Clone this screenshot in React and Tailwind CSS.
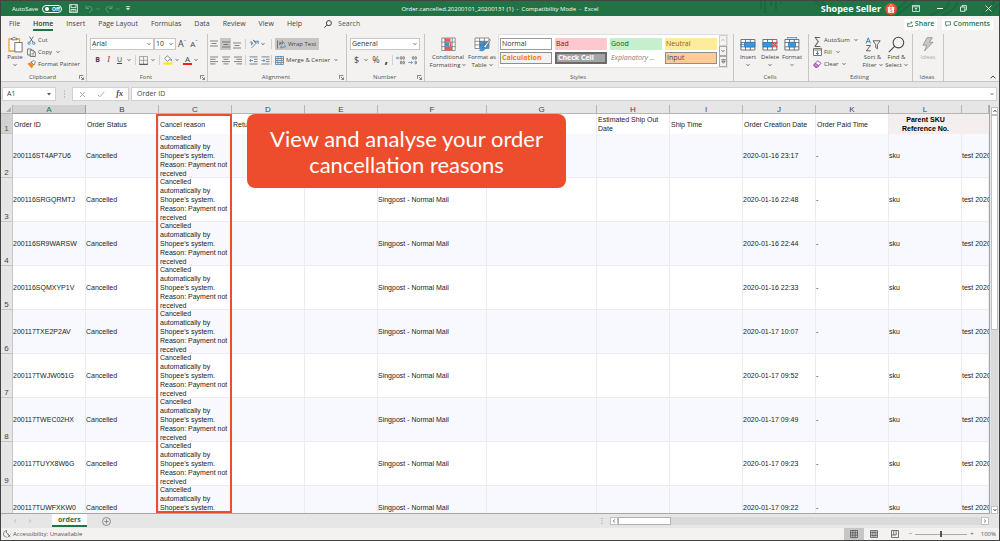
import { useState } from 'react'

/**
 * App.jsx
 * -------
 * Spreadsheet window showing the cancelled orders export, with a callout
 * pointing at the "Cancel reason" column.
 *
 *  title bar → ribbon tabs → ribbon → formula bar → grid → sheet tabs → status
 */

const REASON = "Cancelled automatically by Shopee's system. Reason: Payment not received"

const ORDERS = [
  { row: 2, id: '200116ST4AP7U6', created: '2020-01-16 23:17' },
  { row: 3, id: '200116SRGQRMTJ', created: '2020-01-16 22:48' },
  { row: 4, id: '200116SR9WARSW', created: '2020-01-16 22:44' },
  { row: 5, id: '200116SQMXYP1V', created: '2020-01-16 22:33' },
  { row: 6, id: '200117TXE2P2AV', created: '2020-01-17 10:07' },
  { row: 7, id: '200117TWJW051G', created: '2020-01-17 09:52' },
  { row: 8, id: '200117TWEC02HX', created: '2020-01-17 09:49' },
  { row: 9, id: '200117TUYX8W6G', created: '2020-01-17 09:23' },
  { row: 10, id: '200117TUWFXKW0', created: '2020-01-17 09:22' },
]

const COLUMNS = [
  { letter: 'A', title: 'Order ID', width: 'w-[73px]' },
  { letter: 'B', title: 'Order Status', width: 'w-[73px]' },
  { letter: 'C', title: 'Cancel reason', width: 'w-[73px]' },
  { letter: 'D', title: 'Return / Refund', width: 'w-[73px]' },
  { letter: 'E', title: '', width: 'w-[73px]' },
  { letter: 'F', title: '', width: 'w-[109px]' },
  { letter: 'G', title: '', width: 'w-[110px]' },
  { letter: 'H', title: 'Estimated Ship Out Date', width: 'w-[73px]' },
  { letter: 'I', title: 'Ship Time', width: 'w-[73px]' },
  { letter: 'J', title: 'Order Creation Date', width: 'w-[73px]' },
  { letter: 'K', title: 'Order Paid Time', width: 'w-[73px]' },
  { letter: 'L', title: 'Parent SKU Reference No.', width: 'w-[73px]', strong: true },
  { letter: '', title: '', width: '', strong: true },
]

const TABS = ['File', 'Home', 'Insert', 'Page Layout', 'Formulas', 'Data', 'Review', 'View', 'Help']

const CELL_STYLES = [
  { name: 'Normal', look: 'bg-white text-[#333] border border-[#9a9a9a]' },
  { name: 'Bad', look: 'bg-[#ffc7ce] text-[#9c0006]' },
  { name: 'Good', look: 'bg-[#c6efce] text-[#006100]' },
  { name: 'Neutral', look: 'bg-[#ffeb9c] text-[#9c5700]' },
  { name: 'Calculation', look: 'bg-[#f2f2f2] text-[#fa7d00] font-bold border border-[#8f8f8f]' },
  { name: 'Check Cell', look: 'bg-[#a5a5a5] text-white font-bold border-2 border-[#6b6b6b]' },
  { name: 'Explanatory ...', look: 'text-[#7f7f7f] italic' },
  { name: 'Input', look: 'bg-[#ffcc99] text-[#3f3f76] border border-[#8f8f8f]' },
]

// ── Icons ────────────────────────────────────────────────────────────────
function Chevron({ className = '' }) {
  return (
    <svg className={`w-1 h-1 shrink-0 ${className}`} viewBox="0 0 4 4" fill="none" stroke="currentColor">
      <path d="M.6 1.2 2 2.7 3.4 1.2" strokeWidth=".8" />
    </svg>
  )
}

function Launcher() {
  return (
    <svg className="w-[5px] h-[5px]" viewBox="0 0 5 5" fill="none" stroke="#555" strokeWidth=".7">
      <path d="M.5 3.8V.5h3.8M2 2l2.3 2.3M4.5 2.4v2.1H2.4" />
    </svg>
  )
}

function Lines({ rows, className = '' }) {
  return (
    <svg className={`w-2 h-[9px] ${className}`} viewBox="0 0 8 9" stroke="#555" strokeWidth=".7">
      {rows.map(([x1, x2, y]) => (
        <path key={y} d={`M${x1} ${y}H${x2}`} />
      ))}
    </svg>
  )
}

function TableIcon({ kind }) {
  return (
    <svg className="w-4 h-[15px]" viewBox="0 0 16 15" fill="none" stroke="#555" strokeWidth=".8">
      <path d="M.9 2.5h14v10.500H.9zM.9 5.600h14M.9 9.800h14M5.500 2.500v10.500M10.300 2.500v10.500" fill="#fff" />
      {kind === 'insert' && (
        <>
          <path d="M4.500 5.300h10.500v4.700H4.500z" fill="#3a96dd" stroke="#2b7cc0" />
          <path d="M5.500 7.600H.4M2.300 5.600.4 7.600l1.900 2" stroke="#2b7cc0" />
        </>
      )}
      {kind === 'delete' && (
        <>
          <path d="M1 5.600h8.500v4.200H1z" fill="#3a96dd" stroke="#2b7cc0" />
          <path d="M10 5l5.200 5.200M15.200 5 10 10.200" stroke="#e33b3b" strokeWidth="1.200" />
        </>
      )}
      {kind === 'format' && (
        <>
          <path d="M4.500 5.300h7v4.700h-7z" fill="#3a96dd" stroke="#2b7cc0" />
          <path d="M3.500.7h9M3.500 0v1.500M12.500 0v1.500" stroke="#2b7cc0" />
        </>
      )}
    </svg>
  )
}

function ConditionalIcon() {
  return (
    <svg className="w-[15px] h-[15px]" viewBox="0 0 15 15" stroke="#666" strokeWidth=".7">
      <path d="M.8 1h13.400v12.500H.8z" fill="#fff" />
      <path d="M4 1.300h5.500v3.500H4zM4 10h7v3.200H4z" fill="#ef5a5a" stroke="none" />
      <path d="M4 5.400h4v3.900H4z" fill="#3a96dd" stroke="none" />
      <path d="M8.500 5.400h2v3.900h-2z" fill="#ef5a5a" stroke="none" />
      <path d="M.8 5.100h13.400M.8 9.600h13.400M3.800 1v12.500M11.200 1v12.500" fill="none" />
    </svg>
  )
}

function FormatTableIcon() {
  return (
    <svg className="w-[17px] h-[15px]" viewBox="0 0 17 15" fill="none" stroke="#666" strokeWidth=".7">
      <path d="M1 1h14v10.500H1z" fill="#fff" />
      <path d="M5.600 4.300H15v7.200H5.600z" fill="#3a96dd" stroke="none" />
      <path d="M1 4.300h14M1 7.900h14M5.600 1v10.500M10.300 1v10.500" />
      <path d="M15.800 2.300 9.600 9.800l1.700 1.300 5-7.800z" fill="#fff" />
      <path d="M9.400 10c-1.900.2-1.700 2.400-3.900 3.300 2.300 1.200 5.200.3 5.700-2z" fill="#3a96dd" stroke="#2b7cc0" />
    </svg>
  )
}

function PasteIcon() {
  return (
    <svg className="w-[15px] h-[17px]" viewBox="0 0 15 17" fill="none">
      <path d="M1 3h10.500v12H1z" fill="#fff" stroke="#f0a030" strokeWidth="1.300" />
      <path d="M3.500 3.800V2.400h1.300C5 1 7.600 1 7.800 2.400h1.300v1.400z" fill="#f3f2f1" stroke="#666" strokeWidth=".8" />
      <path d="M6.800 6.500h7.300v9.400H6.800z" fill="#fff" stroke="#666" strokeWidth=".9" />
    </svg>
  )
}

function CutIcon() {
  return (
    <svg className="w-[9px] h-[9px]" viewBox="0 0 9 9" fill="none" strokeWidth=".8">
      <path d="M2.400.5 6 6.200M6.400.5 2.800 6.200" stroke="#555" />
      <circle cx="2" cy="7.200" r="1.200" stroke="#2b7cc0" />
      <circle cx="6.700" cy="7.200" r="1.200" stroke="#2b7cc0" />
    </svg>
  )
}

function CopyIcon() {
  return (
    <svg className="w-[9px] h-[9px]" viewBox="0 0 9 9" fill="#fff" stroke="#555" strokeWidth=".8">
      <path d="M.6 1h3.600v6H.6z" />
      <path d="M3.300 2.200h3l2 2v4.300h-5z" />
      <path d="M6 2.400v2h2M4.500 5.700h2.500M4.500 7h2.500" fill="none" strokeWidth=".6" />
    </svg>
  )
}

function BrushIcon() {
  return (
    <svg className="w-[9px] h-[9px]" viewBox="0 0 9 9">
      <path d="M.4 3.800 3.600 2.300l3 3-1.800 3.200z" fill="#f08a24" />
      <path d="m4 2 3-1.500 1.400 1.400L7 5z" fill="#fff" stroke="#555" strokeWidth=".7" />
    </svg>
  )
}

function BordersIcon() {
  return (
    <svg className="w-[9px] h-[9px]" viewBox="0 0 9 9" fill="none" stroke="#777" strokeWidth=".6">
      <path d="M.5.5h8v7.500M.5.500V8M4.500.5V8M.5 4.300h8" />
      <path d="M.2 8.300h8.600" stroke="#333" strokeWidth="1" />
    </svg>
  )
}

function BucketIcon() {
  return (
    <svg className="w-[10px] h-[10px]" viewBox="0 0 10 10" fill="none">
      <path d="m4.300.800 3.200 3L4.300 6.300 1.700 3.600z" fill="#fff" stroke="#555" strokeWidth=".7" />
      <path d="M7.800 3.500c1.300.8 1.300 2.500.6 2.700-.8 0-.8-1-.6-2.700z" fill="#2b7cc0" />
      <path d="M.5 7.400h9v2.200h-9z" fill="#ffed00" />
    </svg>
  )
}

function FontColorIcon() {
  return (
    <span className="flex flex-col items-center w-[9px]">
      <span className="text-[8px] leading-[7px]">A</span>
      <span className="w-[9px] h-[2px] mt-px bg-[#f02020]" />
    </span>
  )
}

function OrientationIcon() {
  return (
    <svg className="w-[10px] h-[10px]" viewBox="0 0 10 10" fill="none" strokeWidth=".8">
      <path d="M2.600 8.800 9 2.400M6.500 2.200h2.700v2.700" stroke="#2b7cc0" />
      <path d="M1 3.500c1-1.500 2.200-.5 2.800 1.800M3.300 4c-1.600.3-1.600 1.800-.3 1.600M4 .8l2.200 3c1-.9-.3-2.300-1.200-1.500" stroke="#555" />
    </svg>
  )
}

function WrapIcon() {
  return (
    <svg className="w-[9px] h-[9px]" viewBox="0 0 9 9" fill="none" stroke="#555" strokeWidth=".7">
      <path d="M.5.500v8M2 2.500c.8-.8 1.900-.5 1.900.5v1.500M3.800 3.300c-2.200 0-2.200 1.500-.6 1.300M5.200.500v4M5.200 3c.9-1 2.400-.4 2.200.8" />
      <path d="M8 5v2.200H3.500M5 5.800 3.500 7.200 5 8.600" stroke="#2b7cc0" />
    </svg>
  )
}

function MergeIcon() {
  return (
    <svg className="w-[9px] h-[9px]" viewBox="0 0 9 9" fill="none" stroke="#2b7cc0" strokeWidth=".7">
      <path d="M.5.500h8v8h-8z" fill="#d5eafa" />
      <path d="M.5 2.600h8M.5 6.400h8M3 .5v2M6 .5v2M3 6.500v2M6 6.500v2" stroke="#666" />
      <path d="M1.500 4.500h6M2.600 3.500l-1.100 1 1.100 1M6.400 3.500l1.100 1-1.100 1" />
    </svg>
  )
}

function IndentIcon({ out }) {
  return (
    <svg className="w-[9px] h-[9px]" viewBox="0 0 9 9" fill="none" stroke="#555" strokeWidth=".7">
      <path d="M.5.900h8M5 3.300h3.500M5 5.600h3.500M.5 8h8" />
      <path d={out ? 'M4 4.500H.6M2 3 .6 4.500 2 6' : 'M.4 4.500h3.400M2.400 3l1.400 1.500L2.400 6'} stroke="#2b7cc0" />
    </svg>
  )
}

function DecimalIcon({ less }) {
  return (
    <svg className="w-[9px] h-[9px]" viewBox="0 0 9 9" fill="none" stroke="#555" strokeWidth=".7">
      <rect x="4.400" y=".6" width="1.400" height="2.700" rx=".7" />
      <rect x="7" y=".6" width="1.400" height="2.700" rx=".7" />
      <rect x="7" y="5.200" width="1.400" height="2.700" rx=".7" />
      {less ? (
        <path d="M.3 6.500h4M3 5.200l1.400 1.300L3 7.800" stroke="#2b7cc0" />
      ) : (
        <>
          <rect x="4.400" y="5.200" width="1.400" height="2.700" rx=".7" />
          <path d="M3.500 2H.4M1.700.7.400 2l1.300 1.300" stroke="#2b7cc0" />
        </>
      )}
    </svg>
  )
}

function FillIcon() {
  return (
    <svg className="w-[9px] h-2" viewBox="0 0 9 8" fill="none" stroke="#555" strokeWidth=".8">
      <path d="M.5.500h8v7h-8zM.5 2h8" fill="#fff" />
      <path d="M4.500 2.700v3.600M3 5l1.500 1.500L6 5" stroke="#2b7cc0" strokeWidth=".9" />
    </svg>
  )
}

function EraserIcon() {
  return (
    <svg className="w-[9px] h-2" viewBox="0 0 9 8" fill="#fff" stroke="#9a3fb5" strokeWidth=".9">
      <path d="m.7 5 4-4.300 3.400 2.500-4 4.200H2.600z" />
      <path d="m.7 5 1.700-1.800 3.300 2.600-1.600 1.600H2.600z" fill="#c78ad6" />
    </svg>
  )
}

function SortFilterIcon() {
  return (
    <svg className="w-4 h-[15px]" viewBox="0 0 16 15" fill="none" strokeWidth=".9">
      <path d="M1 6.500 3.300.8l2.300 5.700M1.700 4.600h3.200" stroke="#2b7cc0" />
      <path d="M1.300 8.500h4.200L1.300 13.800h4.400" stroke="#555" />
      <path d="M8 3.800h7.200l-2.800 3.700v4.300l-1.700-1.300v-3z" stroke="#555" />
    </svg>
  )
}

function MagnifierIcon({ className }) {
  return (
    <svg className={className} viewBox="0 0 16 16" fill="none" stroke="currentColor">
      <circle cx="9.800" cy="6.200" r="5" />
      <path d="M6.200 9.800.8 15.200" />
    </svg>
  )
}

function BoltIcon() {
  return (
    <svg className="w-3 h-[15px]" viewBox="0 0 12 15" fill="#c8c8c8" stroke="#8f8f8f" strokeWidth=".8">
      <path d="M5 .7h5.400L7.300 5.200h3.800L2.500 14l2.300-5.800H1z" />
    </svg>
  )
}

function ShopeeLogo() {
  return (
    <svg className="w-3 h-3" viewBox="0 0 12 12" fill="none">
      <circle cx="6" cy="6" r="6" fill="#ee4d2d" />
      <path d="M2.700 4h6.600L9 9.700H3z" fill="#fff" />
      <path d="M4.500 4c0-2.800 3-2.800 3 0" stroke="#fff" strokeWidth=".7" />
      <path d="M7.200 5.600c-.8-.7-2.200-.5-2.200.4 0 1.100 2.200.7 2.200 1.800 0 .9-1.500 1-2.400.3" stroke="#ee4d2d" strokeWidth=".7" />
    </svg>
  )
}

// ── Title bar ────────────────────────────────────────────────────────────
function TitleBar() {
  return (
    <header className="relative grid grid-cols-[1fr_auto_1fr] items-center h-[15px] shrink-0 bg-[#217346] text-white text-[6px] leading-[8px]">
      <svg className="absolute right-0 top-0 w-[240px] h-full" viewBox="0 0 240 15" fill="none" stroke="#1d693f" strokeWidth="2">
        <path d="M2 0v8M6 0v12M12 0v5M17 0v9M22 0v3M56 0 72 15M62 0l16 15M130 15l18-15M137 15l18-15M190 0c0 10-16 12-20 15M198 0c0 10-12 13-16 15M222 15l14-15M228 15l12-12" />
      </svg>
      <div className="relative flex items-center pl-[11px]">
        <label htmlFor="autosave" className="w-[30px]">AutoSave</label>
        <span className="relative flex items-center w-5 h-2 rounded-full border border-white">
          <input id="autosave" type="checkbox" role="switch" className="appearance-none ml-[2px] w-1 h-1 rounded-full bg-white" />
          <span className="ml-[3px] text-[5px] leading-[6px] font-bold">Off</span>
        </span>
        <button aria-label="Save" className="ml-[7px]">
          <svg className="w-[9px] h-[9px]" viewBox="0 0 9 9" fill="none" stroke="#fff" strokeWidth=".8">
            <path d="M.6.600h7.800v7.800H.6zM2 .6v3h5v-3M2 8.400V5.600h5v2.800M3.500 7h2" />
          </svg>
        </button>
        <button aria-label="Undo" className="flex items-center gap-[3px] ml-[7px] text-[#5d9b78]">
          <svg className="w-2 h-2" viewBox="0 0 8 8" fill="none" stroke="currentColor">
            <path d="M1 .5v3h3M1.200 3.400C3.500.6 7 1.500 7 4 7 5.500 5.500 6.500 4 7.700" />
          </svg>
          <Chevron />
        </button>
        <button aria-label="Redo" className="flex items-center gap-[3px] ml-[5px] text-[#5d9b78]">
          <svg className="w-2 h-2" viewBox="0 0 8 8" fill="none" stroke="currentColor">
            <path d="M7 .5v3H4M6.800 3.400C4.500.6 1 1.500 1 4c0 1.500 1.500 2.500 3 3.700" />
          </svg>
          <Chevron />
        </button>
        <button aria-label="Customize toolbar" className="ml-[6px]">
          <svg className="w-1 h-[5px]" viewBox="0 0 4 5" stroke="#fff" strokeWidth=".7" fill="#fff">
            <path d="M0 .5h4M.6 2.300h2.800L2 3.900z" />
          </svg>
        </button>
      </div>
      <h1 className="relative whitespace-pre">Order.cancelled.20200101_20200131 (1)  -  Compatibility Mode  -  Excel</h1>
      <div className="relative flex items-center justify-end pr-[7px]">
        <span className="text-[9px] font-bold">Shopee Seller</span>
        <span className="ml-1 mr-[15px]"><ShopeeLogo /></span>
        <button aria-label="Ribbon display options" className="mr-[17px]">
          <svg className="w-2 h-[7px]" viewBox="0 0 8 7" fill="none" stroke="#fff" strokeWidth=".7">
            <path d="M.5.500h7v6h-7zM.5 1.800h7M4 5.700V3M2.900 4 4 2.900 5.100 4" />
          </svg>
        </button>
        <button aria-label="Minimize" className="mr-[17px] w-[6px] h-px bg-white" />
        <button aria-label="Restore" className="mr-[18px]">
          <svg className="w-[7px] h-[7px]" viewBox="0 0 7 7" fill="none" stroke="#fff" strokeWidth=".8">
            <path d="M.5 2h4.300v4.300H.5zM2 2V.6h4.400V5H4.800" />
          </svg>
        </button>
        <button aria-label="Close">
          <svg className="w-[7px] h-[7px]" viewBox="0 0 7 7" stroke="#fff" strokeWidth=".8">
            <path d="m.5.500 6 6M6.500.5l-6 6" />
          </svg>
        </button>
      </div>
    </header>
  )
}

// ── Ribbon tabs ──────────────────────────────────────────────────────────
function RibbonTabs() {
  return (
    <nav className="flex items-center h-4 shrink-0 pl-2 pr-[6px] text-[7px] leading-[10px] text-[#444]">
      <div className="flex items-center gap-[13px]">
        {TABS.map((tab) => (
          <button
            key={tab}
            className={
              tab === 'Home'
                ? 'h-[14px] pt-[2px] border-b-2 border-[#217346] font-semibold text-[#333]'
                : 'h-[14px] pt-[2px] border-b-2 border-transparent'
            }
          >
            {tab}
          </button>
        ))}
      </div>
      <label className="flex items-center gap-[6px] ml-[22px]">
        <MagnifierIcon className="w-2 h-2 stroke-2" />
        <input aria-label="Search" placeholder="Search" className="w-[60px] bg-transparent outline-none placeholder:text-[#555]" />
      </label>
      <div className="flex gap-[5px] ml-auto font-semibold text-[#217346]">
        <button className="flex items-center gap-[2px] h-[11px] px-[3px] rounded-[1px] bg-white">
          <svg className="w-[6px] h-[6px]" viewBox="0 0 6 6" fill="none" stroke="currentColor" strokeWidth=".7">
            <path d="M2 2.300H.5v3.200h5V4M1.800 4c0-2 1.300-2.400 3-2.400M3.800.400l1.300 1.200-1.300 1.300" />
          </svg>
          Share
        </button>
        <button className="flex items-center gap-[2px] h-[11px] px-[3px] rounded-[1px] bg-white">
          <svg className="w-[6px] h-[6px]" viewBox="0 0 6 6" fill="none" stroke="currentColor" strokeWidth=".7">
            <path d="M.5.700h5v3.300H2.700L1.500 5.300V4h-1z" />
          </svg>
          Comments
        </button>
      </div>
    </nav>
  )
}

// ── Ribbon ───────────────────────────────────────────────────────────────
function Group({ label, className, launcher, children }) {
  return (
    <section aria-label={label} className={`flex flex-col h-[49px] pt-[2px] ${className}`}>
      <div className="flex flex-1 border-r border-[#c8c6c4]">
        <div className="flex flex-col flex-1 min-w-0">
          <div className="flex-1 min-h-0">{children}</div>
          <div className="flex items-center justify-center h-2 text-[#555]">
            <span className="flex-1" />
            {label}
            <span className="flex flex-1 justify-end pr-[2px]">{launcher && <Launcher />}</span>
          </div>
        </div>
      </div>
    </section>
  )
}

function Divider() {
  return <span className="w-px h-[10px] bg-[#d2d0ce]" />
}

function Dropdown({ label, value, className }) {
  return (
    <span className={`relative flex items-center h-3 bg-white border border-[#c8c6c4] ${className}`}>
      <select aria-label={label} className="appearance-none w-full pl-px bg-transparent text-[7px] text-[#333] outline-none">
        <option>{value}</option>
      </select>
      <Chevron className="absolute right-[2px] pointer-events-none" />
    </span>
  )
}

function BigButton({ icon, lines, className = '' }) {
  return (
    <button className={`flex flex-col items-center ${className}`}>
      <span className="flex items-center h-[18px]">{icon}</span>
      {lines.map((line, i) => (
        <span key={line} className="flex items-center justify-center gap-[2px] h-2 whitespace-nowrap">
          {line}
          {i === lines.length - 1 && <Chevron />}
        </span>
      ))}
    </button>
  )
}

function SmallButton({ icon, label, chevron }) {
  return (
    <button className="flex items-center gap-[2px] h-3 whitespace-nowrap">
      <span className="flex justify-center w-[9px]">{icon}</span>
      {label}
      {chevron && <Chevron className="ml-[2px]" />}
    </button>
  )
}

function Ribbon() {
  return (
    <div className="flex h-[50px] shrink-0 text-[6px] leading-[8px] text-[#444] border-b border-[#c6c6c6]">
      <Group label="Clipboard" className="w-[86px]" launcher>
        <div className="flex gap-1 pl-[6px]">
          <BigButton icon={<PasteIcon />} lines={['Paste', '']} className="w-4 mt-px" />
          <div>
            <SmallButton icon={<CutIcon />} label="Cut" />
            <SmallButton icon={<CopyIcon />} label="Copy" chevron />
            <SmallButton icon={<BrushIcon />} label="Format Painter" />
          </div>
        </div>
      </Group>

      <Group label="Font" className="w-[121px]" launcher>
        <div className="flex flex-col gap-1 pl-[3px] pt-1">
          <div className="flex items-center h-3">
            <Dropdown label="Font" value="Arial" className="w-16" />
            <Dropdown label="Font size" value="10" className="w-[22px]" />
            <button aria-label="Increase font size" className="ml-[2px] text-[9px]">A<sup className="text-[6px] text-[#2b7cc0]">ˆ</sup></button>
            <button aria-label="Decrease font size" className="ml-1 text-[8px]">A<sup className="text-[6px] text-[#2b7cc0]">ˇ</sup></button>
          </div>
          <div className="flex items-center h-3 pl-[2px]">
            <button aria-label="Bold" className="w-[11px] text-[7px] font-bold">B</button>
            <button aria-label="Italic" className="w-[11px] text-[8px] italic font-['Liberation_Serif',serif]">I</button>
            <button aria-label="Underline" className="flex items-center gap-[5px] pl-[3px] text-[7px]">
              <u>U</u>
              <Chevron />
            </button>
            <span className="w-1" />
            <Divider />
            <button aria-label="Borders" className="flex items-center gap-[3px] ml-[3px]"><BordersIcon /><Chevron /></button>
            <span className="w-1" />
            <Divider />
            <button aria-label="Fill color" className="flex items-center gap-[2px] ml-[3px]"><BucketIcon /><Chevron /></button>
            <button aria-label="Font color" className="flex items-center gap-[2px] ml-1"><FontColorIcon /><Chevron /></button>
          </div>
        </div>
      </Group>

      <Group label="Alignment" className="w-[139px]" launcher>
        <div className="flex flex-col gap-1 pl-[2px] pt-1">
          <div className="flex items-center h-3">
            <button aria-label="Top align"><Lines rows={[[0, 8, 1], [1.5, 6.5, 3.5], [0, 8, 6]]} /></button>
            <button aria-label="Middle align" className="flex items-center justify-center w-[11px] h-3 mx-[2px] bg-[#c8c6c4]">
              <Lines rows={[[0, 8, 2], [1.5, 6.5, 4.5], [0, 8, 7]]} />
            </button>
            <button aria-label="Bottom align"><Lines rows={[[0, 8, 3], [1.5, 6.5, 5.5], [0, 8, 8]]} /></button>
            <span className="w-1" />
            <Divider />
            <button aria-label="Orientation" className="flex items-center gap-[2px] ml-[3px]"><OrientationIcon /><Chevron /></button>
            <span className="w-[6px]" />
            <Divider />
            <button className="flex items-center gap-[2px] h-3 ml-[3px] px-[2px] bg-[#c8c6c4] whitespace-nowrap"><WrapIcon />Wrap Text</button>
          </div>
          <div className="flex items-center h-3">
            <button aria-label="Align left"><Lines rows={[[0, 8, 1], [0, 5.5, 3.3], [0, 8, 5.6], [0, 5.5, 7.9]]} /></button>
            <button aria-label="Center" className="mx-1"><Lines rows={[[0, 8, 1], [1.5, 6.5, 3.3], [0, 8, 5.6], [1.5, 6.5, 7.9]]} /></button>
            <button aria-label="Align right"><Lines rows={[[0, 8, 1], [2.5, 8, 3.3], [0, 8, 5.6], [2.5, 8, 7.9]]} /></button>
            <span className="w-[3px]" />
            <Divider />
            <button aria-label="Decrease indent" className="ml-[3px]"><IndentIcon out /></button>
            <button aria-label="Increase indent" className="ml-[3px]"><IndentIcon /></button>
            <span className="w-px" />
            <Divider />
            <button className="flex items-center gap-[2px] ml-[3px] whitespace-nowrap"><MergeIcon />Merge &amp; Center<Chevron className="ml-[2px]" /></button>
          </div>
        </div>
      </Group>

      <Group label="Number" className="w-[78px]" launcher>
        <div className="flex flex-col gap-1 pl-[3px] pt-1">
          <Dropdown label="Number format" value="General" className="w-[70px]" />
          <div className="flex items-center h-3 pl-1 text-[9px]">
            <button aria-label="Accounting format" className="flex items-center gap-[5px]">$<Chevron /></button>
            <button aria-label="Percent style" className="ml-1">%</button>
            <button aria-label="Comma style" className="ml-[5px] -mt-1 text-[13px] font-bold">,</button>
            <span className="w-1" />
            <Divider />
            <button aria-label="Increase decimal" className="ml-[3px]"><DecimalIcon /></button>
            <button aria-label="Decrease decimal" className="ml-[3px]"><DecimalIcon less /></button>
          </div>
        </div>
      </Group>

      <Group label="Styles" className="flex-1">
        <div className="flex">
          <BigButton icon={<ConditionalIcon />} lines={['Conditional', 'Formatting']} className="ml-[5px] w-[36px] mt-px" />
          <BigButton icon={<FormatTableIcon />} lines={['Format as', 'Table']} className="w-8 mt-px" />
          <div className="flex flex-1 mr-[5px] h-[34px] bg-white border border-[#e1dfdd]">
            <div className="grid flex-1 grid-cols-4 gap-x-[3px] gap-y-[2px] py-[3px] pl-px pr-[2px] text-[7px]">
              {CELL_STYLES.map(({ name, look }) => (
                <button key={name} className={`flex items-center h-3 px-px whitespace-nowrap ${look}`}>{name}</button>
              ))}
            </div>
            <div className="flex flex-col w-2 bg-[#f3f2f1]">
              <button aria-label="Previous styles" className="flex flex-1 items-center justify-center border border-[#d2d0ce] text-[#aaa]"><Chevron className="rotate-180" /></button>
              <button aria-label="Next styles" className="flex flex-1 items-center justify-center border border-[#a8a8a8]"><Chevron /></button>
              <button aria-label="More styles" className="flex flex-1 items-center justify-center border border-[#a8a8a8]">
                <svg className="w-[5px] h-[5px]" viewBox="0 0 5 5" fill="none" stroke="#444" strokeWidth=".7"><path d="M.3.700h4.400M.8 2.200h3.400L2.500 4.200z" /></svg>
              </button>
            </div>
          </div>
        </div>
      </Group>

      <Group label="Cells" className="w-[75px]">
        <div className="flex pl-[3px] pt-px">
          <BigButton icon={<TableIcon kind="insert" />} lines={['Insert', '']} className="w-[22px]" />
          <BigButton icon={<TableIcon kind="delete" />} lines={['Delete', '']} className="w-[22px]" />
          <BigButton icon={<TableIcon kind="format" />} lines={['Format', '']} className="w-[22px]" />
        </div>
      </Group>

      <Group label="Editing" className="w-[104px]">
        <div className="flex pl-1">
          <div className="w-[47px]">
            <SmallButton icon={<span className="text-[10px]">∑</span>} label="AutoSum" chevron />
            <SmallButton icon={<FillIcon />} label="Fill" chevron />
            <SmallButton icon={<EraserIcon />} label="Clear" chevron />
          </div>
          <BigButton icon={<SortFilterIcon />} lines={['Sort &', 'Filter']} className="w-[25px] mt-px" />
          <BigButton icon={<MagnifierIcon className="w-[17px] h-[17px]" />} lines={['Find &', 'Select']} className="w-[23px] mt-px" />
        </div>
      </Group>

      <Group label="Ideas" className="w-[31px]">
        <button className="flex flex-col items-center w-full mt-px text-[#b0aeac]">
          <span className="flex items-center h-[18px]"><BoltIcon /></span>
          Ideas
        </button>
      </Group>

      <div className="flex items-end justify-end w-[55px] pr-[3px] pb-[2px]">
        <button aria-label="Collapse ribbon">
          <svg className="w-[6px] h-[4px]" viewBox="0 0 6 4" fill="none" stroke="#444"><path d="M.6 3.200 3 1l2.400 2.200" /></svg>
        </button>
      </div>
    </div>
  )
}

// ── Formula bar ──────────────────────────────────────────────────────────
function FormulaBar() {
  return (
    <div className="flex h-[14px] shrink-0 mt-[5px] mb-[4px] pl-[1px] pr-[2px] text-[7px] text-[#444]">
      <label className="flex items-center w-[54px] px-1 bg-white border border-[#d0d0d0]">
        <input aria-label="Name box" defaultValue="A1" className="w-full min-w-0 outline-none" />
        <svg className="w-1 h-[3px] shrink-0" viewBox="0 0 4 3" fill="#555"><path d="M0 0h4L2 2.600z" /></svg>
      </label>
      <svg className="w-4 h-full" viewBox="0 0 16 12" fill="#999"><path d="M8 2.500h1v1H8zM8 5.500h1v1H8zM8 8.500h1v1H8z" /></svg>
      <div className="flex items-center justify-between w-[57px] pl-[6px] pr-[5px] bg-white border border-[#d0d0d0]">
        <button aria-label="Cancel">
          <svg className="w-[7px] h-[7px]" viewBox="0 0 7 7" stroke="#aaa"><path d="m1 1 5 5M6 1 1 6" /></svg>
        </button>
        <button aria-label="Enter">
          <svg className="w-2 h-[7px]" viewBox="0 0 8 7" fill="none" stroke="#aaa"><path d="m.8 3.800 2 2L7.200 1" /></svg>
        </button>
        <button aria-label="Insert function" className="font-['Liberation_Serif',serif] text-[8px] italic font-bold">fx</button>
      </div>
      <label className="flex flex-1 items-center ml-[2px] pl-[5px] pr-[2px] bg-white border border-[#d0d0d0]">
        <input aria-label="Formula" defaultValue="Order ID" className="w-full outline-none" />
        <Chevron />
      </label>
    </div>
  )
}

// ── Grid ─────────────────────────────────────────────────────────────────
function RowHeader({ row }) {
  const look = row === 1 ? 'bg-[#d2d2d2] text-[#217346]' : 'bg-[#e6e6e6] text-[#444]'
  return (
    <th scope="row" className={`align-bottom font-normal text-[8px] leading-[9px] border-r border-b border-[#c6c6c6] ${look}`}>
      {row < 10 && row}
    </th>
  )
}

function OrderRow({ order }) {
  const values = [order.id, 'Cancelled', REASON, '', '', order.row === 2 ? '' : 'Singpost - Normal Mail', '', '', '', order.created, '-', 'sku', 'test 2020']
  return (
    <tr className={order.row % 2 === 0 ? 'bg-[#f8f9fe]' : 'bg-white'}>
      <RowHeader row={order.row} />
      {values.map((value, i) => (
        <td key={i} className="p-0 border-r border-b border-[#ebebf0]">
          <div className={i === 2 ? 'flex items-center h-[43px] pl-px' : 'flex items-center h-[43px] whitespace-nowrap'}>
            {value}
          </div>
        </td>
      ))}
    </tr>
  )
}

function Sheet() {
  return (
    <div className="flex flex-1 min-h-0">
      <div className="relative flex-1 overflow-hidden border-r border-b border-[#a6a6a6]">
        <table className="w-full table-fixed border-separate border-spacing-0 font-['Liberation_Sans',Arial,sans-serif] text-[7px] leading-[9px] text-[#222]">
          <colgroup>
            <col className="w-3" />
            {COLUMNS.map(({ width }, i) => <col key={i} className={width} />)}
          </colgroup>
          <thead>
            <tr className="h-[9px] bg-[#e6e6e6] text-[#444] text-[8px] leading-[6px]">
              <td className="p-0 border-r border-b border-[#b5b5b5]">
                <svg className="w-[5px] h-[5px] ml-auto mr-px" viewBox="0 0 5 5" fill="#b0b0b0"><path d="M5 0v5H0z" /></svg>
              </td>
              {COLUMNS.map(({ letter }, i) => (
                <th
                  key={i}
                  scope="col"
                  className={
                    letter === 'A'
                      ? 'p-0 pt-[2px] font-normal bg-[#d2d2d2] text-[#217346] border-r border-b border-[#a0a0a0]'
                      : 'p-0 pt-[2px] font-normal border-r border-b border-[#b5b5b5]'
                  }
                >
                  {letter}
                </th>
              ))}
            </tr>
          </thead>
          <tbody>
            <tr className="bg-white">
              <RowHeader row={1} />
              {COLUMNS.map(({ title, strong }, i) => (
                <td key={i} className={strong ? 'p-0 bg-[#f4efee]' : 'p-0 border-r border-[#ebebf0]'}>
                  <div
                    className={
                      strong
                        ? 'flex items-center justify-center h-5 px-2 font-bold text-center text-black'
                        : 'flex items-center h-5 pl-px'
                    }
                  >
                    {title}
                  </div>
                </td>
              ))}
            </tr>
            {ORDERS.map((order) => <OrderRow key={order.row} order={order} />)}
          </tbody>
        </table>

        {/* highlighted column + callout */}
        <div className="absolute left-[155px] top-[9px] bottom-0 w-[76px] border-2 border-[#ee4d2d]" />
        <p className="absolute left-[246px] top-[9px] w-[319px] h-[74px] pt-3 rounded-lg bg-[#ee4d2d] text-white text-center font-['Lato',sans-serif] text-[22px] leading-[26px]">
          View and analyse your order cancellation reasons
        </p>
      </div>

      <div className="flex flex-col w-[9px] pt-[2px] px-px bg-[#e6e6e6]">
        <button aria-label="Scroll up" className="flex items-center justify-center h-2 bg-white border border-[#c0c0c0]"><Chevron className="rotate-180" /></button>
        <div className="flex-1 bg-[#dadada]"><div className="h-[55%] bg-white border border-[#c0c0c0]" /></div>
        <button aria-label="Scroll down" className="flex items-center justify-center h-2 bg-white border border-[#c0c0c0]"><Chevron /></button>
      </div>
    </div>
  )
}

// ── Sheet tabs + status bar ──────────────────────────────────────────────
function SheetTabs() {
  return (
    <div className="flex items-center h-[14px] shrink-0 bg-[#e6e6e6] text-[7px] leading-[10px] text-[#444]">
      <button aria-label="Previous sheet" className="ml-[12px] text-[#aaa]"><Chevron className="rotate-90" /></button>
      <button aria-label="Next sheet" className="ml-[11px] text-[#aaa]"><Chevron className="-rotate-90" /></button>
      <button className="self-start h-[13px] pt-px ml-5 px-[6px] bg-white border-b-2 border-[#217346] font-bold text-[#217346]">orders</button>
      <button aria-label="New sheet" className="ml-[15px]">
        <svg className="w-[9px] h-[9px]" viewBox="0 0 9 9" fill="none" stroke="#777" strokeWidth=".8"><circle cx="4.500" cy="4.500" r="4" /><path d="M4.500 2.300v4.400M2.300 4.500h4.400" /></svg>
      </button>
      <svg className="w-1 h-2 ml-auto mr-[6px]" viewBox="0 0 4 8" fill="#999"><path d="M1.500 1h1v1h-1zM1.500 3.500h1v1h-1zM1.500 6h1v1h-1z" /></svg>
      <div className="flex items-center w-[38%] h-2 mr-[10px] bg-[#dadada]">
        <button aria-label="Scroll left" className="flex items-center justify-center w-2 h-2 bg-white border border-[#c0c0c0]"><Chevron className="rotate-90" /></button>
        <div className="w-[14%] h-2 bg-white border border-[#b0b0b0]" />
        <button aria-label="Scroll right" className="flex items-center justify-center w-2 h-2 ml-auto bg-white border border-[#c0c0c0]"><Chevron className="-rotate-90" /></button>
      </div>
    </div>
  )
}

function StatusBar() {
  const [zoom, setZoom] = useState(50)

  return (
    <footer className="flex items-center h-3 shrink-0 pl-[2px] pr-[3px] bg-[#f3f2f1] text-[6px] leading-[8px] text-[#555]">
      <svg className="w-2 h-2" viewBox="0 0 8 8" fill="none" stroke="#555" strokeWidth=".7">
        <path d="M3.500.8C1.500.8.5 2.300.5 4s1.200 3 3 3M3.500.3v2.500L6 4.800M4.500 7.500l3-3M4.800 4.500l2.700 2.800" />
      </svg>
      <span className="ml-[2px]">Accessibility: Unavailable</span>
      <div className="flex items-center h-full ml-auto">
        <button aria-label="Normal view" className="flex items-center justify-center w-5 h-full bg-[#c8c6c4]">
          <svg className="w-2 h-2" viewBox="0 0 8 8" fill="none" stroke="#555" strokeWidth=".8"><path d="M.5.500h7v7h-7zM2.800.5v7M5.200.5v7M.5 2.800h7M.5 5.200h7" /></svg>
        </button>
        <button aria-label="Page layout" className="flex items-center justify-center w-[21px] h-full">
          <svg className="w-2 h-2" viewBox="0 0 8 8" fill="none" stroke="#555" strokeWidth=".8"><path d="M.5.500h7v7h-7zM2 2.200h4v3.600H2zM2 4h4M.5 2.200h7M.5 5.800h7" /></svg>
        </button>
        <button aria-label="Page break preview" className="flex items-center justify-center w-[21px] h-full">
          <svg className="w-2 h-2" viewBox="0 0 8 8" fill="none" stroke="#555" strokeWidth=".8"><path d="M.5.500h7v7h-7zM.5 5h4.700V.5M2.800.5V5" /></svg>
        </button>
        <span className="mx-[3px]">−</span>
        <input
          type="range"
          aria-label="Zoom"
          value={zoom}
          onChange={(e) => setZoom(e.target.value)}
          className="appearance-none w-[52px] h-px bg-[#aaa] [&::-webkit-slider-thumb]:appearance-none [&::-webkit-slider-thumb]:w-[2px] [&::-webkit-slider-thumb]:h-[6px] [&::-webkit-slider-thumb]:bg-[#555]"
        />
        <span className="ml-[3px] mr-[7px]">+</span>
        100%
      </div>
    </footer>
  )
}

export default function App() {
  return (
    <div className="flex flex-col h-screen overflow-hidden border border-[#444] bg-[#e6e6e6] font-['Open_Sans','Noto_Sans',sans-serif]">
      <TitleBar />
      <div className="shrink-0 bg-[#f3f2f1]">
        <RibbonTabs />
        <Ribbon />
      </div>
      <FormulaBar />
      <Sheet />
      <SheetTabs />
      <StatusBar />
    </div>
  )
}
